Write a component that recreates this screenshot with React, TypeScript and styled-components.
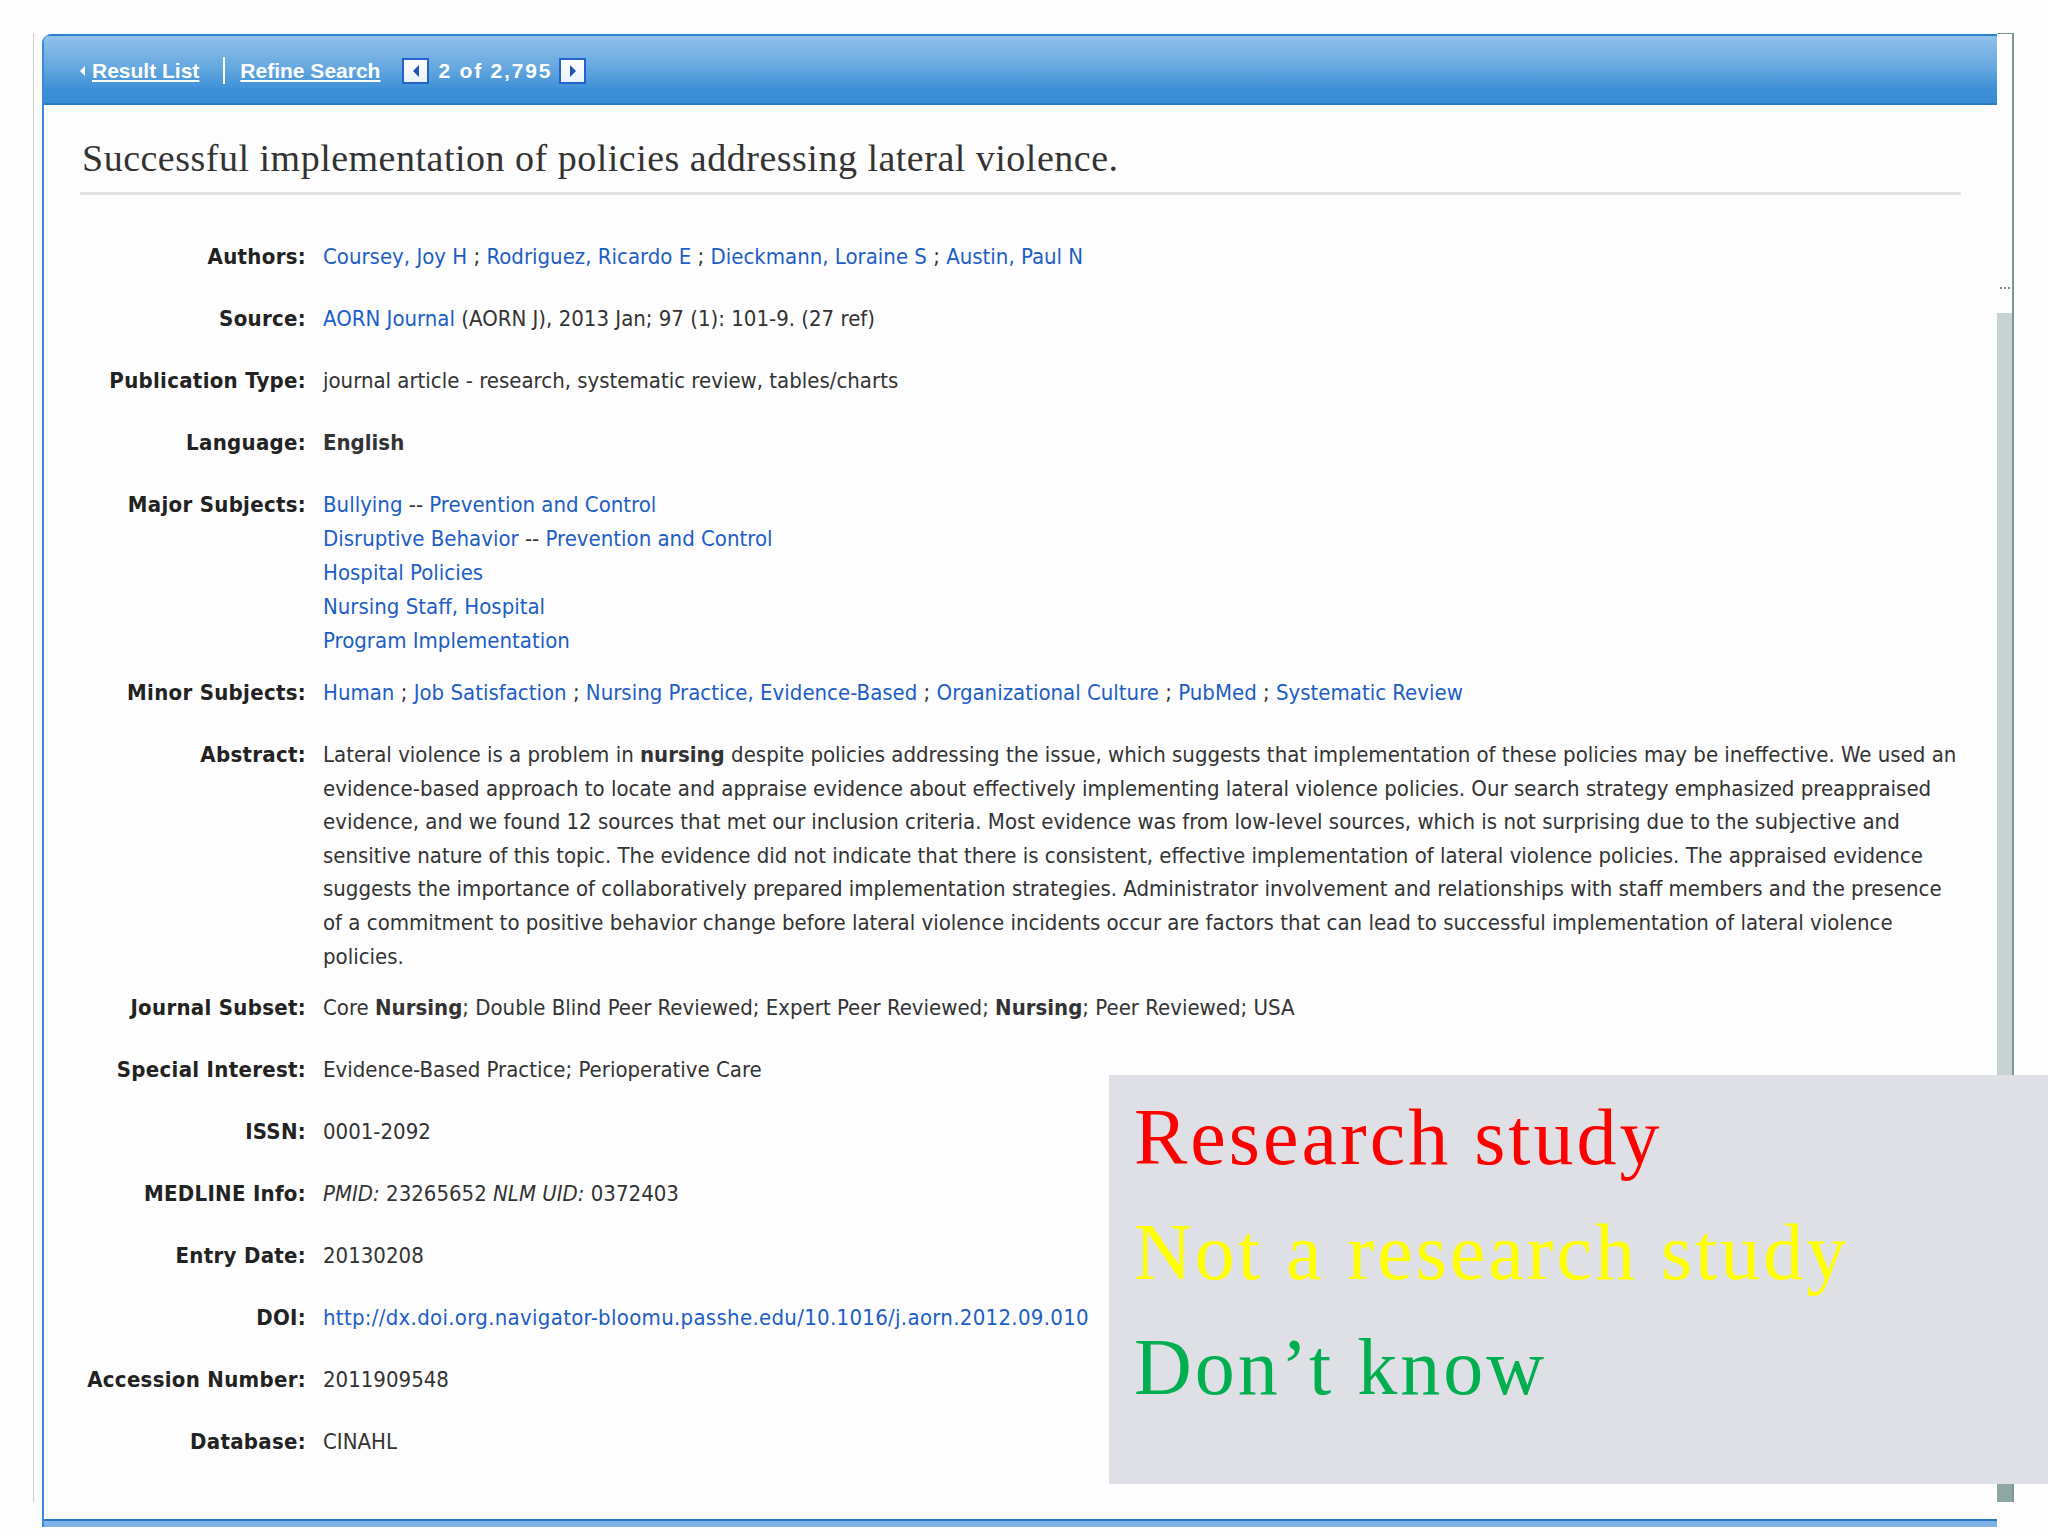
import React from "react";
import styled, { createGlobalStyle } from "styled-components";

const GlobalStyle = createGlobalStyle`
  html, body { margin: 0; padding: 0; background: #fdfdfd; }
  * { box-sizing: border-box; }
`;

const Page = styled.div`
  position: relative;
  width: 2048px;
  height: 1536px;
  overflow: hidden;
  background: #fdfdfd;
  padding: 33px 0 0 33px;
`;

const Frame = styled.div`
  display: flex;
  align-items: flex-start;
  height: 1469px;
  width: 1981px;
  border-left: 1px solid #cfcfcf;
  border-right: 2px solid #7d9791;
`;

const Panel = styled.div`
  margin-left: 8px;
  margin-top: 1px;
  width: 1955px;
  height: 1493px;
  display: flex;
  flex-direction: column;
  border-left: 2px solid #3d8bd4;
  border-top-left-radius: 9px;
  overflow: hidden;
  background: #fdfdfd;
`;

const Header = styled.div`
  height: 71px;
  flex: none;
  display: flex;
  align-items: center;
  padding-left: 36px;
  padding-top: 2px;
  background: linear-gradient(to bottom, #8fc1e9 0%, #68a9e0 45%, #3d90d7 80%, #3a8dd5 100%);
  border-top: 2px solid #2e80cf;
  border-bottom: 2px solid #2a7bc8;
  font-family: "Liberation Sans", Arial, sans-serif;
  font-size: 21px;
  font-weight: bold;
  color: #ffffff;
`;

const NavLink = styled.a`
  color: #ffffff;
  text-decoration: underline;
  text-underline-offset: 2px;
  cursor: pointer;
`;

const BackArrow = styled.svg`
  width: 6px;
  height: 10px;
  margin-right: 6px;
`;

const Separator = styled.span`
  width: 2px;
  height: 27px;
  background: #ffffff;
  margin: 0 15px 0 24px;
`;

const PageButton = styled.span<{ $m: string }>`
  width: 27px;
  height: 26px;
  display: inline-flex;
  align-items: center;
  justify-content: center;
  background: linear-gradient(to bottom, #ffffff, #e9f1fb);
  border: 2px solid #2363cf;
  margin: ${(p) => p.$m};
`;

const Counter = styled.span`
  letter-spacing: 1.8px;
`;

const Content = styled.div`
  flex: 1;
  padding: 31px 36px 0 36px;
  font-family: "DejaVu Sans Condensed", "DejaVu Sans", sans-serif;
  font-stretch: condensed;
  font-size: 22px;
  color: #333333;
`;

const Title = styled.h1`
  margin: 0;
  padding: 0 0 12px 2px;
  font-family: "Liberation Serif", "Times New Roman", serif;
  font-weight: normal;
  font-size: 38px;
  line-height: 44px;
  letter-spacing: 0.5px;
  color: #333333;
  border-bottom: 3px solid #e3e3e7;
`;

const Fields = styled.div`
  margin-top: 45px;
`;

const Row = styled.div<{ $multi?: boolean }>`
  display: grid;
  grid-template-columns: 226px 1fr;
  column-gap: 17px;
  line-height: 34px;
  margin-bottom: ${(p) => (p.$multi ? "18px" : "28px")};
`;

const Label = styled.div`
  text-align: right;
  font-weight: bold;
  color: #222222;
  white-space: nowrap;
  letter-spacing: 0.3px;
`;

const Value = styled.div<{ $strong?: boolean }>`
  font-weight: ${(p) => (p.$strong ? "bold" : "normal")};
  white-space: nowrap;
`;

const Link = styled.a`
  color: #1d5ec6;
  text-decoration: none;
  cursor: pointer;
`;

const DoiLink = styled(Link)`
  letter-spacing: 0.3px;
`;

const Sep = styled.span`
  color: #333333;
`;

const Line = styled.div``;

const AbstractText = styled.div`
  white-space: nowrap;
  line-height: 33.6px;
`;

const Em = styled.i`
  font-style: italic;
`;

const FooterBar = styled.div`
  height: 8px;
  flex: none;
  border-top: 2px solid #2a78c4;
  background: #7fb3e6;
`;

const ScrollCol = styled.div`
  width: 15px;
  height: 1469px;
  display: flex;
  flex-direction: column;
  align-items: stretch;
  border-top: 1px solid #7d9791;
  background: #fdfdfd;
`;

const ScrollDots = styled.div`
  margin-top: 248px;
  height: 12px;
  display: flex;
  justify-content: center;
  gap: 2px;
  align-items: center;
`;

const Dot = styled.span`
  width: 2px;
  height: 2px;
  background: #8a8a8a;
`;

const ScrollThumb = styled.div`
  margin-top: 19px;
  flex: 1;
  background: linear-gradient(
    to bottom,
    #c6d2d4 0,
    #c6d2d4 calc(100% - 18px),
    #8ea7a5 calc(100% - 18px),
    #8ea7a5 100%
  );
`;

const Overlay = styled.div`
  position: absolute;
  left: 1109px;
  top: 1075px;
  width: 939px;
  height: 409px;
  background: #dfe0e6;
  padding: 5px 0 0 25px;
  font-family: "Liberation Serif", "Times New Roman", serif;
  font-size: 80px;
  line-height: 115px;
  letter-spacing: 3px;
`;

const Choice = styled.div<{ $color: string }>`
  color: ${(p) => p.$color};
  white-space: nowrap;
`;

const Tri = ({ dir }: { dir: "left" | "right" }) => (
  <svg width="8" height="12" viewBox="0 0 8 12">
    {dir === "left" ? (
      <polygon points="7,0 7,12 1,6" fill="#1b55b8" />
    ) : (
      <polygon points="1,0 1,12 7,6" fill="#1b55b8" />
    )}
  </svg>
);

const majorSubjects: [string, string | null][] = [
  ["Bullying", "Prevention and Control"],
  ["Disruptive Behavior", "Prevention and Control"],
  ["Hospital Policies", null],
  ["Nursing Staff, Hospital", null],
  ["Program Implementation", null],
];

const minorSubjects = [
  "Human",
  "Job Satisfaction",
  "Nursing Practice, Evidence-Based",
  "Organizational Culture",
  "PubMed",
  "Systematic Review",
];

const abstractLines: React.ReactNode[] = [
  <>
    Lateral violence is a problem in <b>nursing</b> despite policies addressing the issue, which suggests that
    implementation of these policies may be ineffective. We used an
  </>,
  "evidence-based approach to locate and appraise evidence about effectively implementing lateral violence policies. Our search strategy emphasized preappraised",
  "evidence, and we found 12 sources that met our inclusion criteria. Most evidence was from low-level sources, which is not surprising due to the subjective and",
  "sensitive nature of this topic. The evidence did not indicate that there is consistent, effective implementation of lateral violence policies. The appraised evidence",
  "suggests the importance of collaboratively prepared implementation strategies. Administrator involvement and relationships with staff members and the presence",
  "of a commitment to positive behavior change before lateral violence incidents occur are factors that can lead to successful implementation of lateral violence",
  "policies.",
];

export default function App() {
  return (
    <>
      <GlobalStyle />
      <Page>
        <Frame>
          <Panel>
            <Header>
              <BackArrow viewBox="0 0 6 10">
                <polygon points="5,0 5,10 0,5" fill="#ffffff" />
              </BackArrow>
              <NavLink>Result List</NavLink>
              <Separator />
              <NavLink>Refine Search</NavLink>
              <PageButton $m="0 9px 0 22px">
                <Tri dir="left" />
              </PageButton>
              <Counter>2 of 2,795</Counter>
              <PageButton $m="0 0 0 7px">
                <Tri dir="right" />
              </PageButton>
            </Header>
            <Content>
              <Title>Successful implementation of policies addressing lateral violence.</Title>
              <Fields>
                <Row>
                  <Label>Authors:</Label>
                  <Value>
                    <Link>Coursey, Joy H</Link> ; <Link>Rodriguez, Ricardo E</Link> ;{" "}
                    <Link>Dieckmann, Loraine S</Link> ; <Link>Austin, Paul N</Link>
                  </Value>
                </Row>
                <Row>
                  <Label>Source:</Label>
                  <Value>
                    <Link>AORN Journal</Link> (AORN J), 2013 Jan; 97 (1): 101-9. (27 ref)
                  </Value>
                </Row>
                <Row>
                  <Label>Publication Type:</Label>
                  <Value>journal article - research, systematic review, tables/charts</Value>
                </Row>
                <Row>
                  <Label>Language:</Label>
                  <Value $strong>English</Value>
                </Row>
                <Row $multi>
                  <Label>Major Subjects:</Label>
                  <Value>
                    {majorSubjects.map(([a, b]) => (
                      <Line key={a}>
                        <Link>{a}</Link>
                        {b && (
                          <>
                            <Sep> -- </Sep>
                            <Link>{b}</Link>
                          </>
                        )}
                      </Line>
                    ))}
                  </Value>
                </Row>
                <Row>
                  <Label>Minor Subjects:</Label>
                  <Value>
                    {minorSubjects.map((s, i) => (
                      <React.Fragment key={s}>
                        {i > 0 && <Sep> ; </Sep>}
                        <Link>{s}</Link>
                      </React.Fragment>
                    ))}
                  </Value>
                </Row>
                <Row $multi>
                  <Label>Abstract:</Label>
                  <AbstractText>
                    {abstractLines.map((l, i) => (
                      <Line key={i}>{l}</Line>
                    ))}
                  </AbstractText>
                </Row>
                <Row>
                  <Label>Journal Subset:</Label>
                  <Value>
                    Core <b>Nursing</b>; Double Blind Peer Reviewed; Expert Peer Reviewed; <b>Nursing</b>; Peer
                    Reviewed; USA
                  </Value>
                </Row>
                <Row>
                  <Label>Special Interest:</Label>
                  <Value>Evidence-Based Practice; Perioperative Care</Value>
                </Row>
                <Row>
                  <Label>ISSN:</Label>
                  <Value>0001-2092</Value>
                </Row>
                <Row>
                  <Label>MEDLINE Info:</Label>
                  <Value>
                    <Em>PMID:</Em> 23265652 <Em>NLM UID:</Em> 0372403
                  </Value>
                </Row>
                <Row>
                  <Label>Entry Date:</Label>
                  <Value>20130208</Value>
                </Row>
                <Row>
                  <Label>DOI:</Label>
                  <Value>
                    <DoiLink>http://dx.doi.org.navigator-bloomu.passhe.edu/10.1016/j.aorn.2012.09.010</DoiLink>
                  </Value>
                </Row>
                <Row>
                  <Label>Accession Number:</Label>
                  <Value>2011909548</Value>
                </Row>
                <Row>
                  <Label>Database:</Label>
                  <Value>CINAHL</Value>
                </Row>
              </Fields>
            </Content>
            <FooterBar />
          </Panel>
          <ScrollCol>
            <ScrollDots>
              <Dot />
              <Dot />
              <Dot />
            </ScrollDots>
            <ScrollThumb />
          </ScrollCol>
        </Frame>
        <Overlay>
          <Choice $color="#ff0000">Research study</Choice>
          <Choice $color="#ffff00">Not a research study</Choice>
          <Choice $color="#00b050">Don’t know</Choice>
        </Overlay>
      </Page>
    </>
  );
}
